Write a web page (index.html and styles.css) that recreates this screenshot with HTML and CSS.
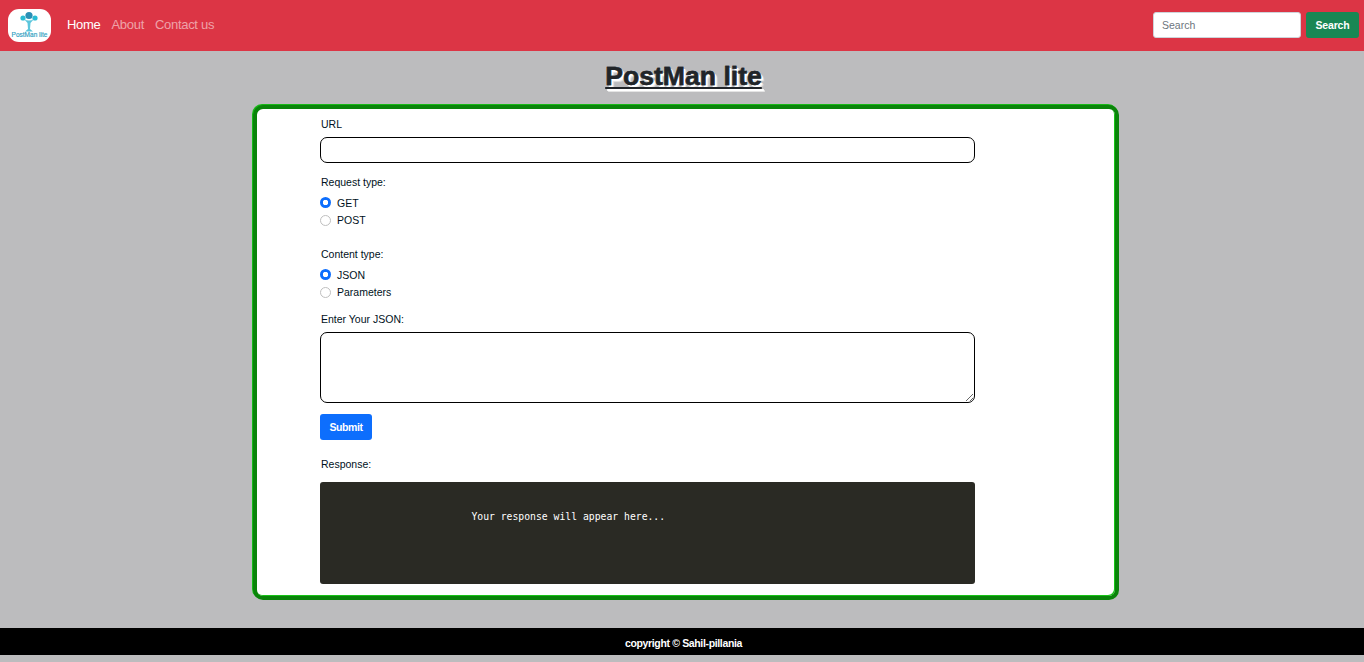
FILE: index.html
```html
<!DOCTYPE html>
<html lang="en">
<head>
<meta charset="utf-8">
<title>PostMan lite</title>
<link rel="stylesheet" href="styles.css">
</head>
<body>
<nav class="navbar">
  <a class="logo" href="#">
    <svg viewBox="0 0 43 33" width="43" height="33">
      <rect width="43" height="33" rx="11" fill="#fff"/>
      <circle cx="21" cy="6.500" r="3.600" fill="#2b8fb5"/>
      <circle cx="15" cy="9" r="2.600" fill="#29bcd4"/>
      <circle cx="27" cy="9" r="2.600" fill="#29bcd4"/>
      <path d="M16 10q5 3 10 0l-3.500 4-.5 6 3 2.500h-8l3-2.500-.5-6z" fill="#5cc6dc"/>
      <text x="21.500" y="28" class="logo-text">PostMan lite</text>
    </svg>
  </a>
  <ul class="nav-links">
    <li><a class="nav-link active" href="#">Home</a></li>
    <li><a class="nav-link" href="#">About</a></li>
    <li><a class="nav-link" href="#">Contact us</a></li>
  </ul>
  <form class="search">
    <input class="search-input" type="search" placeholder="Search">
    <button class="search-btn" type="button">Search</button>
  </form>
</nav>
<main class="page">
  <h1 class="title">PostMan lite</h1>
  <section class="card">
    <form class="panel">
      <label class="label url-label" for="url">URL</label>
      <input class="field url" id="url" type="text">
      <p class="label request">Request type:</p>
      <label class="radio"><input type="radio" name="req" checked><span>GET</span></label>
      <label class="radio"><input type="radio" name="req"><span>POST</span></label>
      <p class="label content">Content type:</p>
      <label class="radio"><input type="radio" name="ct" checked><span>JSON</span></label>
      <label class="radio"><input type="radio" name="ct"><span>Parameters</span></label>
      <label class="label json" for="json">Enter Your JSON:</label>
      <textarea class="field area" id="json"></textarea>
      <button class="submit" type="button">Submit</button>
      <p class="label response">Response:</p>
      <pre class="output">                    Your response will appear here...</pre>
    </form>
  </section>
</main>
<footer class="footer">copyright © Sahil-pillania</footer>
</body>
</html>
```
FILE: styles.css
```css
* { box-sizing: border-box; }
html, body { margin: 0; height: 100%; }
body { background: #bcbcbe; font-family: "Liberation Sans", Arial, sans-serif; font-size: 10.500px; color: #212529; }
.navbar { display: flex; align-items: center; height: 51px; background: #dc3545; padding: 0 5px 2px 8px; }
.logo { display: block; width: 43px; height: 33px; margin-top: 2px; }
.logo-text { font-family: "Liberation Sans", sans-serif; font-size: 6.500px; fill: #2a9cc0; text-anchor: middle; stroke: #2a9cc0; stroke-width: .15px; }
.nav-links { display: flex; gap: 11px; list-style: none; margin: 0 auto 0 16px; padding: 0; font-size: 13px; letter-spacing: -.3px; }
.nav-link { color: rgba(255,255,255,.55); text-decoration: none; }
.nav-link.active { color: #fff; }
.search { display: flex; gap: 5px; margin: 0; }
.search-input { width: 148px; height: 26px; border: 1px solid #ced4da; border-radius: 3px; padding: 0 8px; font: 10.500px "Liberation Sans", sans-serif; background: #fff; }
.search-input::placeholder { color: #6c757d; }
.search-btn { width: 53px; height: 26px; border: 0; border-radius: 3px; background: #198754; color: #fff; font: 700 10.500px "Liberation Sans", sans-serif; letter-spacing: -.15px; padding: 0; }
.page { display: flex; flex-direction: column; align-items: center; }
.title { margin: 9px 0 12px 3px; height: 33px; font-size: 26.600px; line-height: 33px; font-weight: 700; text-decoration: underline; -webkit-text-stroke: .4px #212529; text-shadow: 2px 2px 0 #fff, 3px 3px 1px #e4e4e4; }
.card { width: 866px; height: 495px; margin-left: 8px; padding: 6px 0 0 63px; background: #fff; border: 4px solid #0a840a; border-radius: 10px; box-shadow: -1px -1px 0 #17b817, inset -1px -1px 0 #17c417; }
.panel { width: 655px; color: #012; display: flex; flex-direction: column; align-items: flex-start; }
.label { display: block; margin: 0; line-height: 19px; padding-left: 1px; }
.field { display: block; width: 655px; border: 1px solid #000; border-radius: 7px; background: #fff; }
.url { height: 26px; margin-top: 3px; }
.request { margin-top: 10px; }
.radio { display: flex; align-items: center; gap: 6px; height: 17.500px; }
.radio input { appearance: none; width: 11px; height: 11px; margin: 0; border: 1px solid #bfbfbf; border-radius: 50%; background: #fff; }
.radio input:checked { border: 0; background: radial-gradient(circle, #fff 0 2.500px, #0d6efd 3px); }
.request + .radio { margin-top: 2px; }
.content { margin-top: 16px; }
.content + .radio { margin-top: 2px; }
.json { margin-top: 9px; }
.area { height: 71px; margin-top: 3px; }
.submit { margin-top: 11px; width: 52px; height: 26px; border: 0; border-radius: 3px; background: #0d6efd; color: #fff; font: 700 10.500px "Liberation Sans", sans-serif; letter-spacing: -.4px; padding: 0; }
.response { margin-top: 15px; }
.output { width: 655px; height: 102px; margin: 8px 0 0; padding: 28px 0 0 34px; background: #2a2a24; color: #fff; border-radius: 3px; font: 9.750px/1.400 "DejaVu Sans Mono", monospace; }
.footer { position: absolute; top: 628px; left: 3px; right: 0; height: 27px; background: #000; color: #fff; font-weight: 700; text-align: center; line-height: 30px; letter-spacing: -.35px; box-shadow: -3px 0 0 #000; }
```
